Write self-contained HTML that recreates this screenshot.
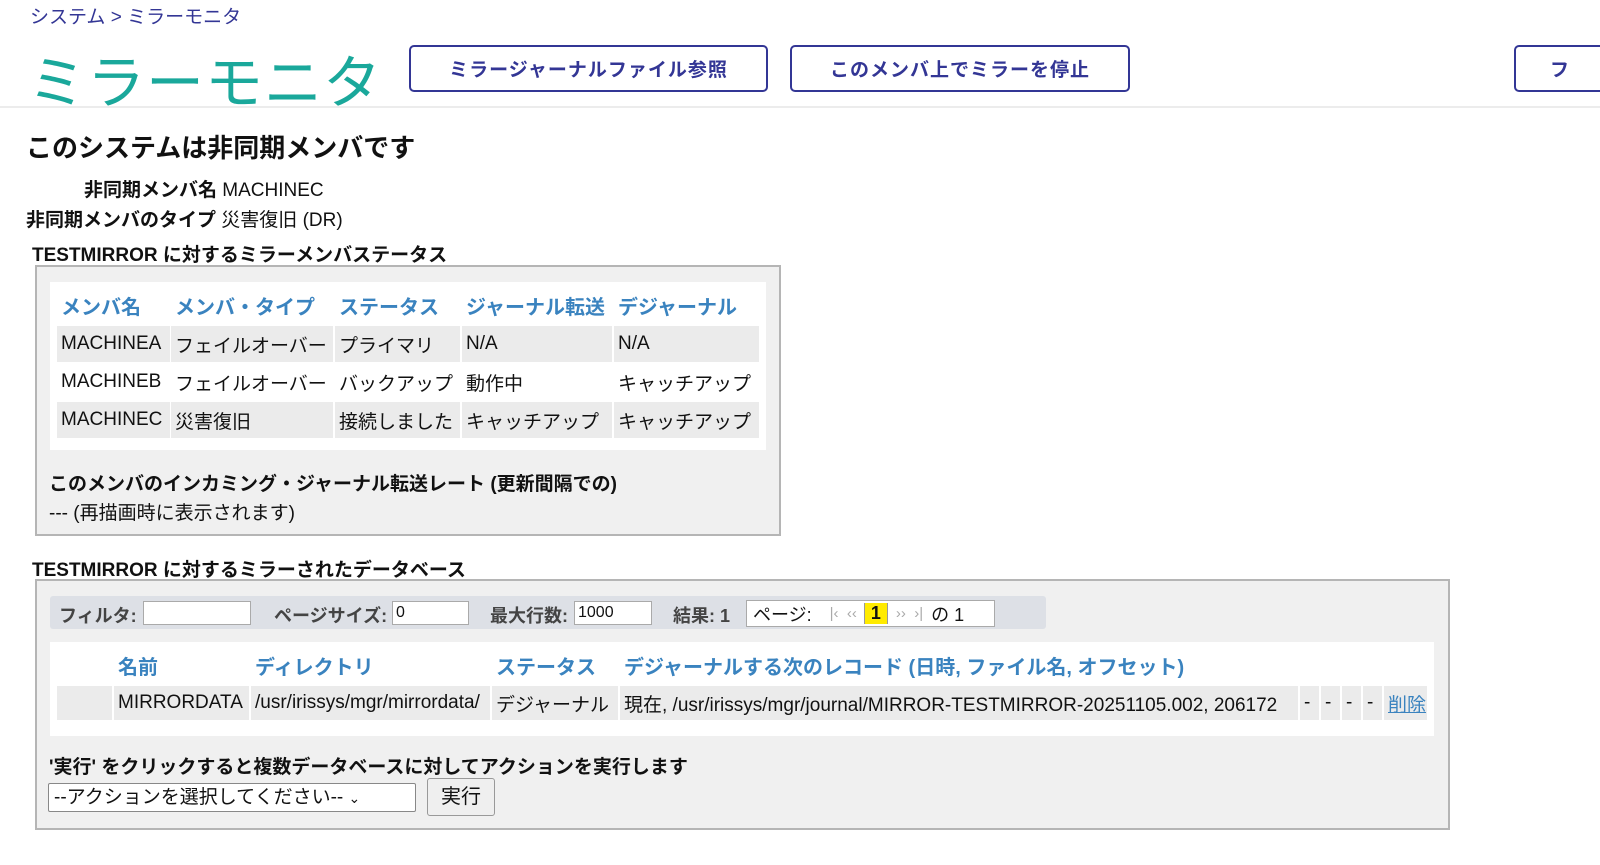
<!DOCTYPE html>
<html><head><meta charset="utf-8">
<style>
*{margin:0;padding:0;box-sizing:border-box}
body{width:1600px;height:865px;overflow:hidden;background:#fff;font-family:"Liberation Sans","Noto Sans CJK JP",sans-serif;color:#111;position:relative;font-size:19px}
.a{position:absolute;white-space:nowrap}
.btn{position:absolute;top:45px;height:47px;border:2.5px solid #333695;border-radius:5px;color:#333695;font-weight:bold;font-size:19px;display:flex;align-items:center;justify-content:center;letter-spacing:1px}
.box{position:absolute;background:#f0f0f0;border:2px solid #b5b5b5}
.c{position:absolute;display:flex;align-items:center;padding-left:4px;white-space:nowrap}
.h{color:#3a83bf;font-weight:bold;font-size:20px;background:#fff}
.g{background:#ebebeb}
.w{background:#fff}
.in{position:absolute;background:#fff;border:1px solid #aaa;height:24px;font-size:16px;padding-left:3px;display:flex;align-items:center}
b{font-weight:bold}
</style></head><body>
<div class="a" style="left:30px;top:2px;color:#333695;font-size:19px">システム &gt; ミラーモニタ</div>
<div class="a" style="left:28px;top:36px;color:#1aa89b;font-size:58px;letter-spacing:1px">ミラーモニタ</div>
<div class="btn" style="left:409px;width:359px">ミラージャーナルファイル参照</div>
<div class="btn" style="left:790px;width:340px">このメンバ上でミラーを停止</div>
<div class="btn" style="left:1514px;width:120px;justify-content:flex-start;padding-left:34px">フ</div>
<div class="a" style="left:0;top:106px;width:1600px;height:2px;background:#ececec"></div>

<div class="a" style="left:26px;top:128px;font-size:26px;font-weight:bold">このシステムは非同期メンバです</div>
<div class="a" style="left:84px;top:175px"><b>非同期メンバ名</b> MACHINEC</div>
<div class="a" style="left:26px;top:205px"><b>非同期メンバのタイプ</b> 災害復旧 (DR)</div>
<div class="a" style="left:32px;top:240px;font-weight:bold">TESTMIRROR に対するミラーメンバステータス</div>

<div class="box" style="left:35px;top:265px;width:746px;height:271px"></div>
<div class="a w" style="left:50px;top:282px;width:716px;height:168px"></div>
<div class="c h" style="left:57px;top:286px;width:113px;height:38px">メンバ名</div>
<div class="c h" style="left:171px;top:286px;width:162px;height:38px">メンバ・タイプ</div>
<div class="c h" style="left:335px;top:286px;width:125px;height:38px">ステータス</div>
<div class="c h" style="left:462px;top:286px;width:150px;height:38px">ジャーナル転送</div>
<div class="c h" style="left:614px;top:286px;width:145px;height:38px">デジャーナル</div>

<div class="c g" style="left:57px;top:326px;width:113px;height:36px">MACHINEA</div>
<div class="c g" style="left:171px;top:326px;width:162px;height:36px">フェイルオーバー</div>
<div class="c g" style="left:335px;top:326px;width:125px;height:36px">プライマリ</div>
<div class="c g" style="left:462px;top:326px;width:150px;height:36px">N/A</div>
<div class="c g" style="left:614px;top:326px;width:145px;height:36px">N/A</div>

<div class="c w" style="left:57px;top:364px;width:113px;height:36px">MACHINEB</div>
<div class="c w" style="left:171px;top:364px;width:162px;height:36px">フェイルオーバー</div>
<div class="c w" style="left:335px;top:364px;width:125px;height:36px">バックアップ</div>
<div class="c w" style="left:462px;top:364px;width:150px;height:36px">動作中</div>
<div class="c w" style="left:614px;top:364px;width:145px;height:36px">キャッチアップ</div>

<div class="c g" style="left:57px;top:402px;width:113px;height:36px">MACHINEC</div>
<div class="c g" style="left:171px;top:402px;width:162px;height:36px">災害復旧</div>
<div class="c g" style="left:335px;top:402px;width:125px;height:36px">接続しました</div>
<div class="c g" style="left:462px;top:402px;width:150px;height:36px">キャッチアップ</div>
<div class="c g" style="left:614px;top:402px;width:145px;height:36px">キャッチアップ</div>

<div class="a" style="left:49px;top:469px;font-weight:bold">このメンバのインカミング・ジャーナル転送レート (更新間隔での)</div>
<div class="a" style="left:49px;top:498px">--- (再描画時に表示されます)</div>

<div class="a" style="left:32px;top:555px;font-weight:bold">TESTMIRROR に対するミラーされたデータベース</div>
<div class="box" style="left:35px;top:579px;width:1415px;height:251px"></div>
<div class="a" style="left:50px;top:596px;width:996px;height:33px;background:#dde0e6;border-radius:3px"></div>
<div class="a" style="left:59px;top:602px;font-weight:bold;font-size:18px;color:#444">フィルタ:</div>
<div class="in" style="left:143px;top:601px;width:108px"></div>
<div class="a" style="left:274px;top:602px;font-weight:bold;font-size:18px;color:#444">ページサイズ:</div>
<div class="in" style="left:392px;top:601px;width:77px">0</div>
<div class="a" style="left:490px;top:602px;font-weight:bold;font-size:18px;color:#444">最大行数:</div>
<div class="in" style="left:574px;top:601px;width:78px">1000</div>
<div class="a" style="left:673px;top:602px;font-weight:bold;font-size:18px;color:#444">結果: 1</div>
<div class="in" style="left:746px;top:600px;width:249px;height:27px;font-size:18px;padding-left:6px">ページ:<span style="color:#aaa;margin-left:18px;font-size:15px">|‹ &nbsp;‹‹</span><span style="background:#ffeb00;font-weight:bold;padding:0 6px;margin-left:7px;border-left:1px solid #999;border-right:1px solid #999">1</span><span style="color:#aaa;font-size:15px;margin-left:8px">›› &nbsp;›|</span><span style="margin-left:8px">の 1</span></div>

<div class="a w" style="left:50px;top:642px;width:1384px;height:94px"></div>
<div class="c h" style="left:57px;top:646px;width:55px;height:38px"></div>
<div class="c h" style="left:114px;top:646px;width:135px;height:38px">名前</div>
<div class="c h" style="left:251px;top:646px;width:239px;height:38px">ディレクトリ</div>
<div class="c h" style="left:492px;top:646px;width:126px;height:38px">ステータス</div>
<div class="c h" style="left:620px;top:646px;width:678px;height:38px">デジャーナルする次のレコード (日時, ファイル名, オフセット)</div>

<div class="c g" style="left:57px;top:686px;width:55px;height:34px"></div>
<div class="c g" style="left:114px;top:686px;width:135px;height:34px">MIRRORDATA</div>
<div class="c g" style="left:251px;top:686px;width:239px;height:34px">/usr/irissys/mgr/mirrordata/</div>
<div class="c g" style="left:492px;top:686px;width:126px;height:34px">デジャーナル</div>
<div class="c g" style="left:620px;top:686px;width:678px;height:34px">現在, /usr/irissys/mgr/journal/MIRROR-TESTMIRROR-20251105.002, 206172</div>
<div class="c g" style="left:1300px;top:686px;width:19px;height:34px">-</div>
<div class="c g" style="left:1321px;top:686px;width:19px;height:34px">-</div>
<div class="c g" style="left:1342px;top:686px;width:19px;height:34px">-</div>
<div class="c g" style="left:1363px;top:686px;width:19px;height:34px">-</div>
<div class="c g" style="left:1384px;top:686px;width:43px;height:34px;color:#3a83bf;text-decoration:underline">削除</div>

<div class="a" style="left:49px;top:752px;font-weight:bold">'実行' をクリックすると複数データベースに対してアクションを実行します</div>
<div class="a" style="left:48px;top:783px;width:368px;height:29px;border:1px solid #888;border-radius:2px;background:#fff;padding-left:5px;line-height:27px">--アクションを選択してください-- <span style="font-size:14px">⌄</span></div>
<div class="a" style="left:427px;top:778px;width:68px;height:38px;border:1px solid #999;border-radius:3px;background:#efefef;text-align:center;line-height:36px;font-size:20px">実行</div>
</body></html>
